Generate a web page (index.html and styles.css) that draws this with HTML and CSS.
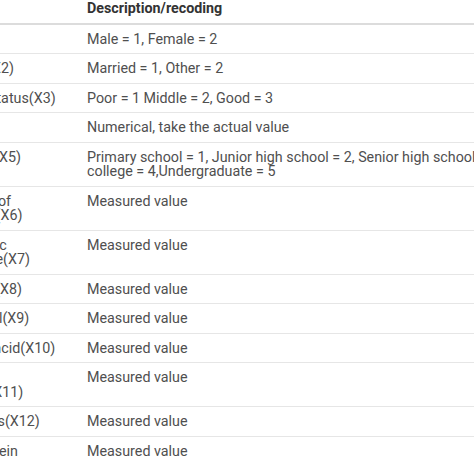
FILE: index.html
```html
<!DOCTYPE html>
<html lang="en">
<head>
<meta charset="utf-8">
<title>Variables</title>
<link rel="stylesheet" href="styles.css">
</head>
<body>
<div class="frame">
  <table class="vars">
    <colgroup>
      <col class="col-name">
      <col class="col-desc">
    </colgroup>
    <thead>
      <tr><th>Variables</th><th>Description/recoding</th></tr>
    </thead>
    <tbody>
      <tr><td>Gender(X1)</td><td>Male = 1, Female = 2</td></tr>
      <tr><td>Marriage status(X2)</td><td>Married = 1, Other = 2</td></tr>
      <tr><td>Socioeconomic status(X3)</td><td>Poor = 1 Middle = 2, Good = 3</td></tr>
      <tr><td>Age(X4)</td><td>Numerical, take the actual value</td></tr>
      <tr><td>Educational level(X5)</td><td>Primary school = 1, Junior high school = 2, Senior high school = 3, Junior<br>college = 4,Undergraduate = 5</td></tr>
      <tr><td>Average duration of<br>physical exercise(X6)</td><td>Measured value</td></tr>
      <tr><td>Nocturnal diastolic<br>systemic pressure(X7)</td><td>Measured value</td></tr>
      <tr><td>Body mass index(X8)</td><td>Measured value</td></tr>
      <tr><td>Serum cholesterol(X9)</td><td>Measured value</td></tr>
      <tr><td>Total serum uric acid(X10)</td><td>Measured value</td></tr>
      <tr><td>High-density<br>HDL cholesterol(X11)</td><td>Measured value</td></tr>
      <tr><td>Blood triglycerides(X12)</td><td>Measured value</td></tr>
      <tr><td>Mean urinary protein<br>(X13)</td><td>Measured value</td></tr>
    </tbody>
  </table>
</div>
</body>
</html>
```

FILE: styles.css
```css
html, body {
  margin: 0;
  padding: 0;
  background: #ffffff;
}

.frame {
  width: 474px;
  height: 474px;
  overflow: hidden;
}

.vars {
  table-layout: fixed;
  width: 800px;
  border-collapse: collapse;
  margin-top: -6px;
  margin-left: -121px;
  font-family: Roboto, "Liberation Sans", Arial, sans-serif;
  font-size: 14.3px;
  line-height: 14.5px;
  color: #4f4f4f;
}

.col-name {
  width: 200px;
}

.col-desc {
  width: 600px;
}

.vars th,
.vars td {
  padding: 7px 8px;
  text-align: left;
  vertical-align: top;
  white-space: nowrap;
  overflow: hidden;
}

.vars th {
  font-weight: 700;
  color: #333333;
  border-bottom: 2px solid #dcdcdc;
}

.vars td {
  font-weight: 400;
  border-bottom: 1px solid #e6e6e6;
}
```
